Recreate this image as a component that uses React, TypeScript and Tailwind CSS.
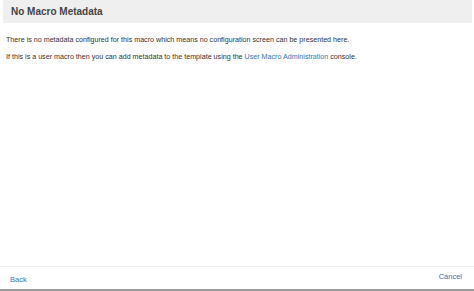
export default function App() {
  return (
    <div className="h-[291px] w-[474px] bg-white flex flex-col overflow-hidden font-['Liberation_Sans',Arial,sans-serif] text-[#333]">
      <div className="h-[23px] ml-[3px] mr-[2px] bg-[#efefef] flex items-center px-[8px]">
        <h2 className="text-[10px] font-bold text-[#444]">No Macro Metadata</h2>
      </div>
      <div className="flex-1 px-[6px] pt-[9px] text-[7.15px] leading-[17px] text-[#333]">
        <p>There is no metadata configured for this macro which means no configuration screen can be presented here.</p>
        <p>
          If this is a user macro then you can add metadata to the template using the{" "}
          <a className="text-[#3b73af]">User Macro Administration</a> console.
        </p>
      </div>
      <div className="h-[23px] border-t border-[#f0f0f0] flex items-center justify-between px-[10px] text-[7.5px] text-[#3b73af]">
        <span className="mt-[4px]">Back</span>
        <span className="mr-[2px] -mt-[3px]">Cancel</span>
      </div>
      <div className="h-[2px] bg-[#999]" />
    </div>
  )
}
